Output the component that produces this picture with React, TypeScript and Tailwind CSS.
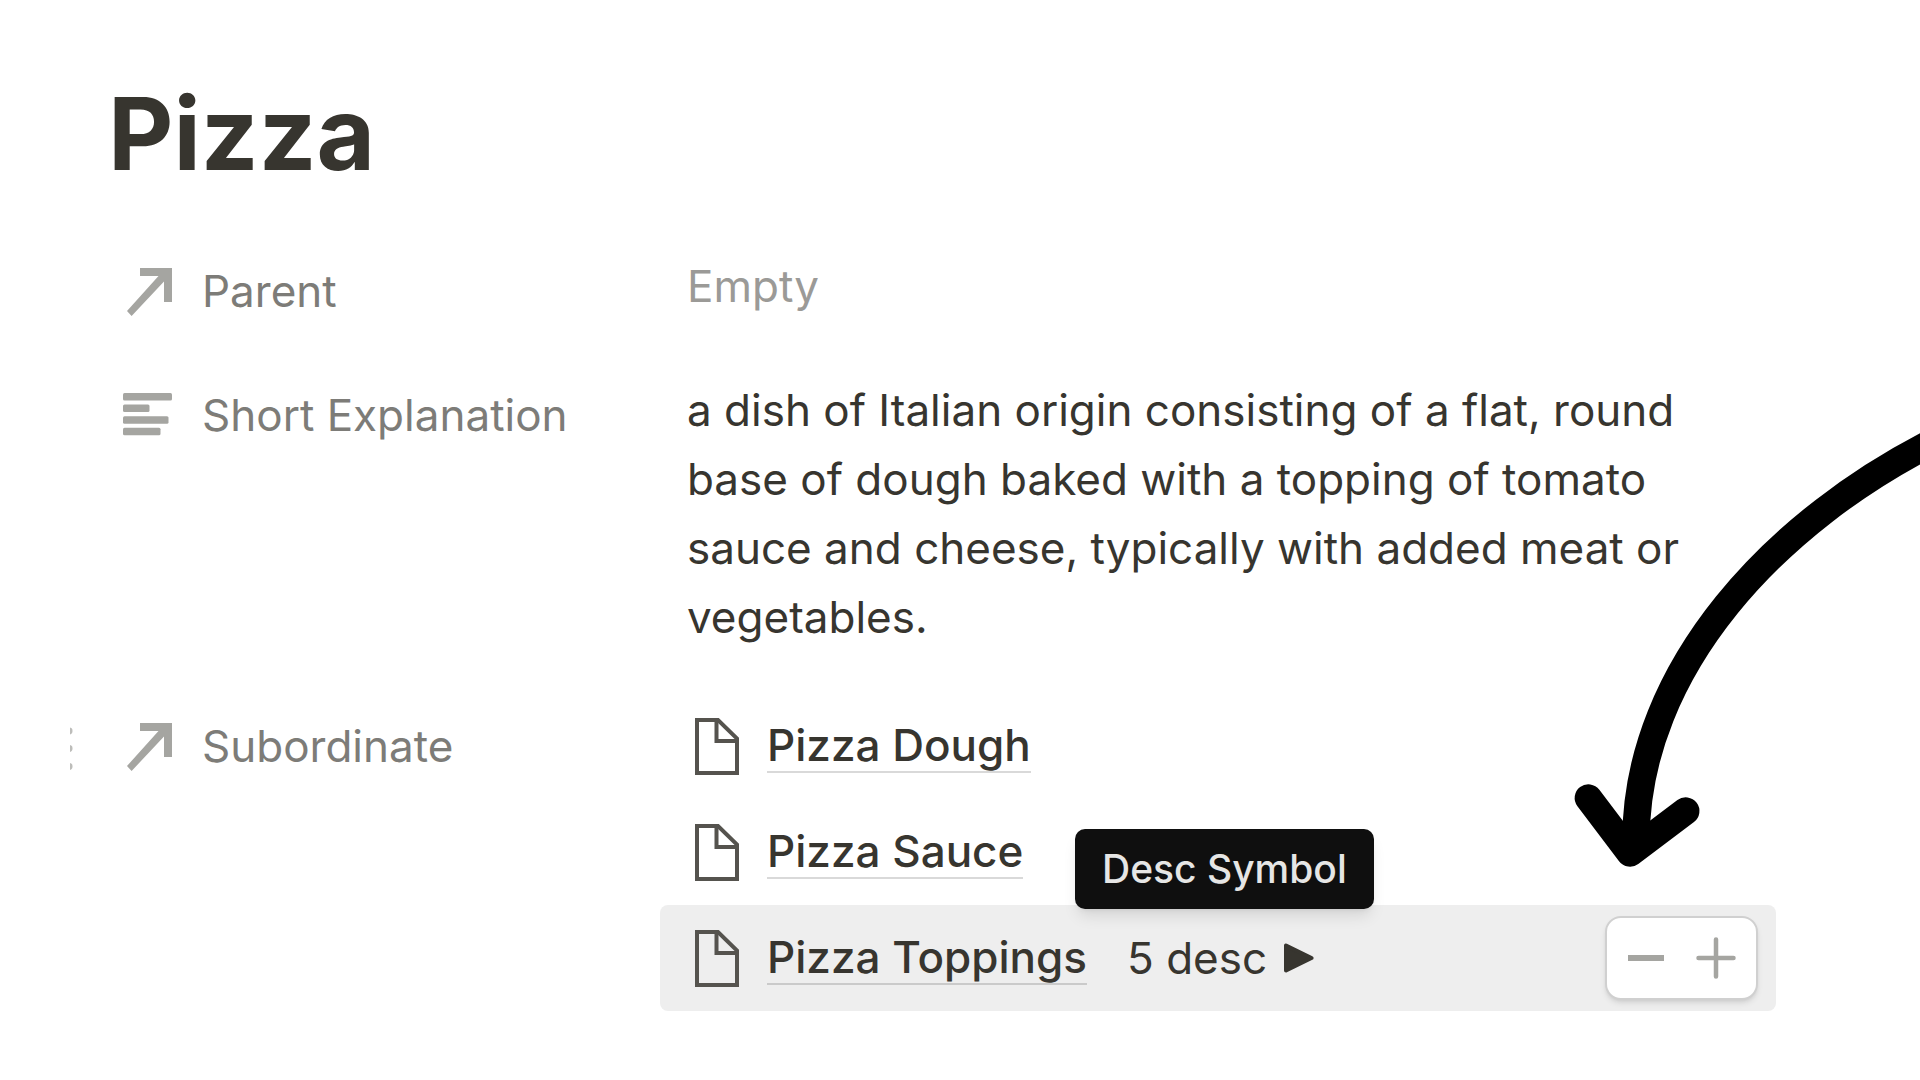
import { ReactNode, useState } from "react";

type Subordinate = {
  id: string;
  title: string;
  descendants?: number;
};

const subordinates: Subordinate[] = [
  { id: "dough", title: "Pizza Dough" },
  { id: "sauce", title: "Pizza Sauce" },
  { id: "toppings", title: "Pizza Toppings", descendants: 5 },
];

const explanation =
  "a dish of Italian origin consisting of a flat, round base of dough baked with a topping of tomato sauce and cheese, typically with added meat or vegetables.";

function RelationIcon() {
  return (
    <svg className="h-12 w-[49px]" viewBox="0 0 49 48" fill="#a5a5a1" aria-hidden="true">
      <path d="M17 0H49V34H41V13.500L8.600 48L4 43L35.500 8H17Z" />
    </svg>
  );
}

function TextIcon() {
  return (
    <svg className="h-12 w-[49px]" viewBox="0 0 49 48" fill="#a5a5a1" aria-hidden="true">
      <rect x="0" y="1" width="49" height="7.500" rx="1.500" />
      <rect x="0" y="12.600" width="26.500" height="7.500" rx="1.500" />
      <rect x="0" y="24.200" width="45.500" height="7.500" rx="1.500" />
      <rect x="0" y="35.800" width="37.500" height="7.500" rx="1.500" />
    </svg>
  );
}

function PageIcon() {
  return (
    <svg className="h-[57px] w-11 shrink-0" viewBox="0 0 44 57" fill="none" stroke="#55534e" strokeWidth="4" aria-hidden="true">
      <path d="M2 2H23L42 20.500V55H2Z" />
      <path d="M21.500 2V23H42" />
    </svg>
  );
}

function DragHandle() {
  return (
    <button type="button" aria-label="Drag property" className="absolute top-[33px] -left-[38px]">
      <svg className="h-12 w-1" viewBox="0 0 4 48" fill="#bdbdba" aria-hidden="true">
        <circle cx="-1" cy="5" r="3.500" />
        <circle cx="-1" cy="22.500" r="3.500" />
        <circle cx="-1" cy="40.500" r="3.500" />
      </svg>
    </button>
  );
}

function PropertyRow({ icon, label, handle, children }: { icon: ReactNode; label: string; handle?: boolean; children: ReactNode }) {
  return (
    <div className="relative flex items-start">
      {handle && <DragHandle />}
      <div className="flex w-[552px] shrink-0 items-center gap-[30px] pt-[19px] pl-[15px] leading-[69px] text-[#7d7c78]">
        {icon}
        <span>{label}</span>
      </div>
      <div className="min-w-0 flex-1">{children}</div>
    </div>
  );
}

function SubordinateItem({ item }: { item: Subordinate }) {
  const [count, setCount] = useState<number>(item.descendants ?? 0);
  const active = item.descendants !== undefined;

  return (
    <li className={`relative flex h-[106px] items-center rounded-lg pr-[18px] pl-[35px] ${active ? "bg-[#eeeeee]" : ""}`}>
      <PageIcon />
      <a href={`#${item.id}`} className="ml-7 border-b-2 border-black/15 leading-[52px] font-medium">
        {item.title}
      </a>
      {active && (
        <>
          <button type="button" className="ml-10 flex items-center gap-4">
            {count} desc
            <svg className="h-[30px] w-[31px]" viewBox="0 0 31 30" fill="#37352f" stroke="#37352f" strokeWidth="4" strokeLinejoin="round" aria-hidden="true">
              <path d="M3 2.500V27.500L28.500 15Z" />
            </svg>
          </button>
          <div className="ml-auto flex h-[84px] w-[153px] items-center justify-center gap-8 rounded-2xl border-2 border-[#d0d0d0] bg-white shadow-md">
            <button type="button" aria-label="Remove" onClick={() => setCount(count - 1)}>
              <svg className="h-10 w-9" viewBox="0 0 36 40" fill="none" stroke="#a5a5a1" strokeWidth="6" aria-hidden="true">
                <path d="M0 20H36" />
              </svg>
            </button>
            <button type="button" aria-label="Add" onClick={() => setCount(count + 1)}>
              <svg className="h-[42px] w-10" viewBox="0 0 40 42" fill="none" stroke="#a5a5a1" strokeWidth="4.500" strokeLinecap="round" aria-hidden="true">
                <path d="M2.500 21H37.500M20 2.500V39.500" />
              </svg>
            </button>
          </div>
          <div role="tooltip" className="absolute -top-[76px] left-[415px] rounded-[10px] bg-[#0f0f0f] px-[27px] text-[39px] leading-[80px] font-medium whitespace-nowrap text-[#e6e6e5] shadow-lg">
            Desc Symbol
          </div>
        </>
      )}
    </li>
  );
}

function CurvedArrow() {
  return (
    <svg
      className="pointer-events-none absolute top-[430px] right-0 h-[450px] w-[360px]"
      viewBox="1560 430 360 450"
      fill="none"
      stroke="#000"
      strokeWidth="27.500"
      strokeLinecap="round"
      strokeLinejoin="round"
      aria-hidden="true"
    >
      <path d="M1636 840C1636 668 1777 519 1940 438.500" />
      <path d="M1588.400 798L1630 853L1685.700 811" />
    </svg>
  );
}

export default function App() {
  return (
    <main className="relative min-h-screen overflow-hidden bg-white pt-[72px] pr-36 pb-16 pl-[108px] font-['Inter',sans-serif] text-[44px] text-[#37352f]">
      <h1 className="text-[101px] leading-[122px] font-bold">Pizza</h1>

      <div className="mt-11 flex flex-col gap-[27px]">
        <PropertyRow icon={<RelationIcon />} label="Parent">
          <p className="px-[27px] py-3.5 leading-[69px] text-[#9b9a97]">Empty</p>
        </PropertyRow>
        <PropertyRow icon={<TextIcon />} label="Short Explanation">
          <p className="px-[27px] py-3.5 leading-[69px]">{explanation}</p>
        </PropertyRow>
        <PropertyRow icon={<RelationIcon />} label="Subordinate" handle>
          <ul>
            {subordinates.map((item) => (
              <SubordinateItem key={item.id} item={item} />
            ))}
          </ul>
        </PropertyRow>
      </div>

      <CurvedArrow />
    </main>
  );
}
